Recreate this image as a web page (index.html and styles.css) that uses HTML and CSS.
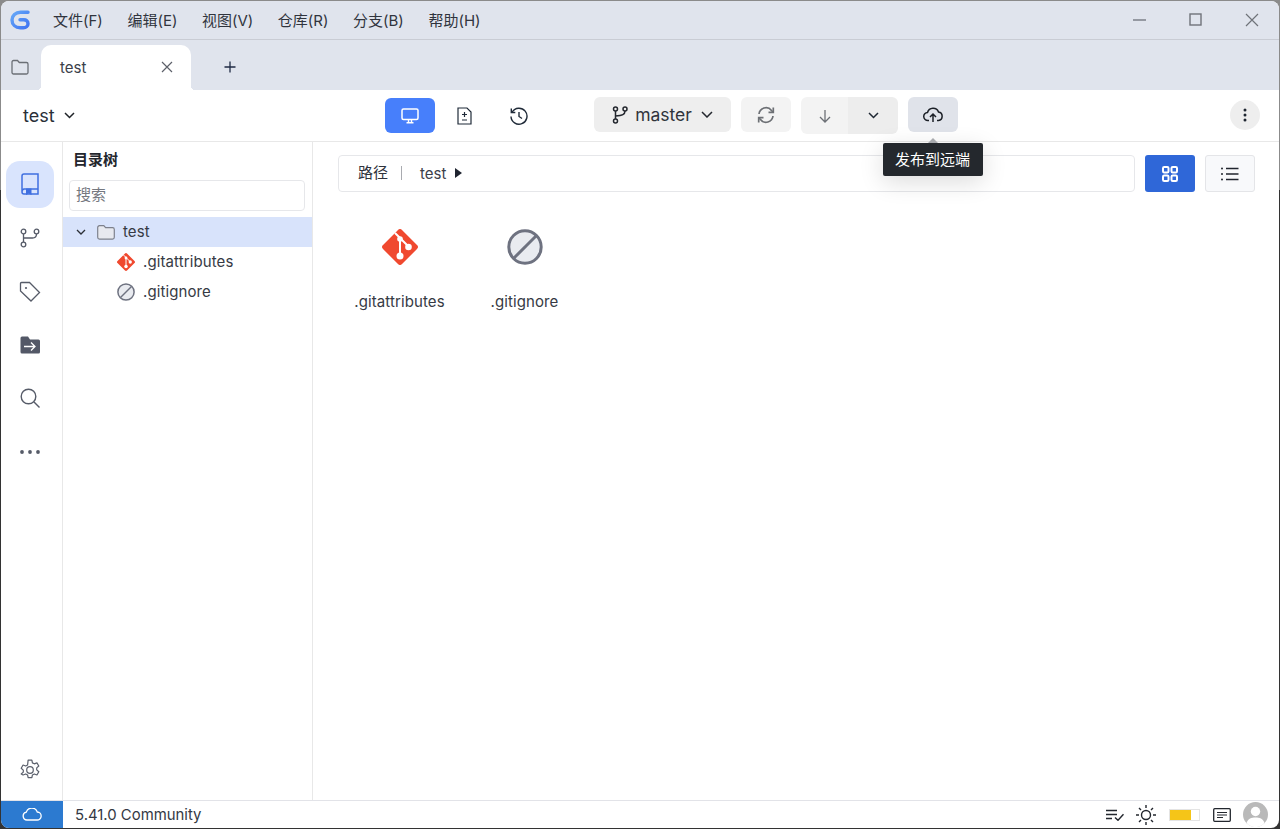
FILE: index.html
```html
<!DOCTYPE html>
<html lang="zh">
<head>
<meta charset="utf-8">
<title>test</title>
<link rel="stylesheet" href="styles.css">
</head>
<body>
<div class="window">
  <header class="menubar">
    <svg class="logo" width="20" height="20" viewBox="0 0 20 20" fill="none">
      <defs><linearGradient id="lg" x1="0" y1="0" x2="1" y2="1"><stop offset="0" stop-color="#66a8f7"/><stop offset="1" stop-color="#3f74f2"/></linearGradient></defs>
      <path d="M18 2.300H10.500C5.500 2.300 2 5.700 2 10c0 4.600 3.500 7.700 8.300 7.700h3c2.900 0 4.700-1.700 4.700-4 0-2.400-1.800-3.900-4.200-3.900H10" stroke="url(#lg)" stroke-width="3.400" stroke-linecap="round"/>
    </svg>
    <nav class="menu">
      <span>文件(F)</span><span>编辑(E)</span><span>视图(V)</span><span>仓库(R)</span><span>分支(B)</span><span>帮助(H)</span>
    </nav>
    <div class="winctl">
      <svg width="14" height="14" viewBox="0 0 14 14"><path d="M0 7h13" stroke="#7c8088" stroke-width="1.400"/></svg>
      <svg width="14" height="14" viewBox="0 0 14 14" fill="none"><rect x="1" y="1" width="11" height="11" stroke="#6f7379" stroke-width="1.400"/></svg>
      <svg width="14" height="14" viewBox="0 0 14 14" fill="none"><path d="M1 1l12 12M13 1L1 13" stroke="#6f7379" stroke-width="1.200"/></svg>
    </div>
  </header>

  <div class="tabbar">
    <svg class="tabfolder" width="18" height="16" viewBox="0 0 18 16" fill="none"><path d="M1 3a1.500 1.500 0 0 1 1.500-1.500h4l1.800 2h7.200A1.500 1.500 0 0 1 17 5v8.500a1.500 1.500 0 0 1-1.500 1.500h-13A1.500 1.500 0 0 1 1 13.500z" stroke="#6b6f76" stroke-width="1.300"/></svg>
    <div class="tab">
      <span>test</span>
      <svg class="tabclose" width="12" height="12" viewBox="0 0 12 12" fill="none"><path d="M1 1l10 10M11 1L1 11" stroke="#5d616a" stroke-width="1.200"/></svg>
    </div>
    <svg class="tabplus" width="12" height="12" viewBox="0 0 12 12" fill="none"><path d="M6 .5v11M.5 6h11" stroke="#1f2a44" stroke-width="1.300"/></svg>
  </div>

  <div class="toolbar">
    <div class="repo"><span>test</span>
      <svg width="11" height="7" viewBox="0 0 11 7" fill="none"><path d="M1 1l4.500 4.500L10 1" stroke="#1f2328" stroke-width="1.500"/></svg>
    </div>
    <div class="viewbtns">
      <button class="tbtn view-on">
        <svg width="18" height="16" viewBox="0 0 18 16" fill="none"><rect x="1" y="1" width="16" height="10.500" rx="1.500" stroke="#fff" stroke-width="1.500"/><path d="M7.500 12v2M10.500 12v2M5.500 14.800h7" stroke="#fff" stroke-width="1.400"/></svg>
      </button>
      <button class="tbtn plain">
        <svg width="15" height="18" viewBox="0 0 15 18" fill="none"><path d="M1 1h9l4 4v12H1z" stroke="#1f2a38" stroke-width="1.200"/><path d="M7.500 5v5M5 7.500h5M5 13h5" stroke="#1f2a38" stroke-width="1.200"/></svg>
      </button>
      <button class="tbtn plain">
        <svg width="19" height="18" viewBox="0 0 19 18" fill="none"><path d="M3.200 5A8 8 0 1 1 2 9.500" stroke="#1f2a38" stroke-width="1.400"/><path d="M2.300 1.500v4h4" stroke="#1f2a38" stroke-width="1.400"/><path d="M10 5v4.500l3 2" stroke="#1f2a38" stroke-width="1.400"/></svg>
      </button>
    </div>
    <button class="branch">
      <svg width="16" height="18" viewBox="0 0 16 18" fill="none"><circle cx="3.500" cy="3" r="2" stroke="#23272e" stroke-width="1.500"/><circle cx="3.500" cy="15" r="2" stroke="#23272e" stroke-width="1.500"/><circle cx="13" cy="3" r="2" stroke="#23272e" stroke-width="1.500"/><path d="M3.500 5v8M13 5c0 3.500-2.500 4.500-9.500 5" stroke="#23272e" stroke-width="1.500"/></svg>
      <span>master</span>
      <svg width="12" height="7" viewBox="0 0 12 7" fill="none"><path d="M1 1l5 5 5-5" stroke="#23272e" stroke-width="1.500"/></svg>
    </button>
    <button class="tbtn gray refresh">
      <svg width="18" height="18" viewBox="0 0 18 18" fill="none"><path d="M2 8a7 7 0 0 1 12.500-3.500L16 6M16 10a7 7 0 0 1-12.500 3.500L2 12" stroke="#6d7075" stroke-width="1.700"/><path d="M16.300 1.500V6.300h-4.800M1.700 16.500v-4.800h4.800" stroke="#6d7075" stroke-width="1.700"/></svg>
    </button>
    <div class="pull">
      <button class="pull-main">
        <svg width="12" height="14" viewBox="0 0 12 14" fill="none"><path d="M6 1v12M1 8l5 5 5-5" stroke="#6c7076" stroke-width="1.300"/></svg>
      </button>
      <button class="pull-more">
        <svg width="11" height="7" viewBox="0 0 11 7" fill="none"><path d="M1 1l4.500 4.500L10 1" stroke="#1e2733" stroke-width="1.500"/></svg>
      </button>
    </div>
    <button class="tbtn push">
      <svg width="20" height="16" viewBox="0 0 20 16" fill="none"><path d="M6 13.500H5a4 4 0 0 1-.5-8A5.800 5.800 0 0 1 15.500 5a4.300 4.300 0 0 1 0 8.500H14" stroke="#1c2027" stroke-width="1.500"/><path d="M10 15V7.500M7 10l3-3 3 3" stroke="#1c2027" stroke-width="1.500"/></svg>
    </button>
    <button class="kebab">
      <svg width="4" height="14" viewBox="0 0 4 14"><circle cx="2" cy="2" r="1.500" fill="#1e2530"/><circle cx="2" cy="7" r="1.500" fill="#1e2530"/><circle cx="2" cy="12" r="1.500" fill="#1e2530"/></svg>
    </button>
    <div class="tooltip">发布到远端</div>
  </div>

  <div class="main">
    <aside class="rail">
      <div class="rail-top">
        <div class="rail-item active">
          <svg width="18" height="23" viewBox="0 0 18 23" fill="none"><path d="M1 19V3a2 2 0 0 1 2-2h14v20H3a2 2 0 0 1-2-2 3 3 0 0 1 2-3h14" stroke="#3f6fe0" stroke-width="1.500"/><path d="M5 15.500h5.500V22l-2.750-1.500L5 22z" fill="#3f6fe0"/></svg>
        </div>
        <div class="rail-item">
          <svg width="20" height="20" viewBox="0 0 20 20" fill="none"><circle cx="3.500" cy="3.500" r="2.300" stroke="#565b68" stroke-width="1.300"/><circle cx="3.500" cy="16.500" r="2.300" stroke="#565b68" stroke-width="1.300"/><circle cx="16.500" cy="3.500" r="2.300" stroke="#565b68" stroke-width="1.300"/><path d="M3.500 6v8M16.500 6c0 3-1.500 4-4 4H3.500" stroke="#565b68" stroke-width="1.300"/></svg>
        </div>
        <div class="rail-item">
          <svg width="22" height="22" viewBox="0 0 22 22" fill="none"><path d="M1.500 2.500a1 1 0 0 1 1-1h8l10 10-8.500 8.500-10.500-10z" stroke="#565b68" stroke-width="1.300"/><circle cx="7" cy="7" r="1.100" fill="#565b68"/></svg>
        </div>
        <div class="rail-item">
          <svg width="20" height="18" viewBox="0 0 20 18"><path d="M.5 2A1.500 1.500 0 0 1 2 .5h6l2 3h8.500A1.500 1.500 0 0 1 20 5v11a1.500 1.500 0 0 1-1.500 1.500H2A1.500 1.500 0 0 1 .5 16z" fill="#535867"/><path d="M4 10.500h11M11 6.500l4 4-4 4" fill="none" stroke="#fff" stroke-width="1.300"/></svg>
        </div>
        <div class="rail-item">
          <svg class="glass" width="20" height="20" viewBox="0 0 20 20" fill="none"><circle cx="8.500" cy="8.500" r="7.300" stroke="#565b68" stroke-width="1.400"/><path d="M14 14l5.500 5.500" stroke="#565b68" stroke-width="1.400"/></svg>
        </div>
        <div class="rail-item">
          <svg width="20" height="4" viewBox="0 0 20 4"><circle cx="2" cy="2" r="1.900" fill="#565b68"/><circle cx="10" cy="2" r="1.900" fill="#565b68"/><circle cx="18" cy="2" r="1.900" fill="#565b68"/></svg>
        </div>
      </div>
      <div class="rail-gear">
        <svg width="22" height="22" viewBox="0 0 20 20" fill="none"><circle cx="10" cy="10" r="3" stroke="#5b606c" stroke-width="1.100"/><path d="M8.300 1h3.400l.5 2.500 1.700.9 2.400-.9 1.700 2.900-1.900 1.700v1.800l1.900 1.700-1.700 2.900-2.400-.9-1.700.9-.5 2.500H8.300l-.5-2.500-1.700-.9-2.400.9L2 13.600l1.900-1.700V10.100L2 8.400l1.700-2.900 2.400.9 1.700-.9z" stroke="#5b606c" stroke-width="1.100" stroke-linejoin="round"/></svg>
      </div>
    </aside>

    <section class="tree">
      <h2 class="tree-title">目录树</h2>
      <div class="search">搜索</div>
      <div class="tree-row selected">
        <svg class="caret" width="10" height="6" viewBox="0 0 10 6" fill="none"><path d="M1 1l4 4 4-4" stroke="#2b2f36" stroke-width="1.300"/></svg>
        <svg width="18" height="15" viewBox="0 0 18 15"><path d="M.7 2.500A1.800 1.800 0 0 1 2.500.7h4.300l1.800 2h6.900a1.800 1.800 0 0 1 1.800 1.800v7.800a1.800 1.800 0 0 1-1.800 1.800h-13A1.800 1.800 0 0 1 .7 12.300z" fill="#e7e9ef" stroke="#7d818c" stroke-width="1.200"/></svg>
        <span>test</span>
      </div>
      <div class="tree-row file">
        <svg width="18" height="18" viewBox="0 0 36 36"><use href="#giticon"/></svg>
        <span>.gitattributes</span>
      </div>
      <div class="tree-row file">
        <svg width="18" height="18" viewBox="0 0 36 36"><use href="#noicon"/></svg>
        <span>.gitignore</span>
      </div>
    </section>

    <section class="content">
      <div class="pathrow">
        <div class="pathbar">
          <span class="path-label">路径</span>
          <span class="path-crumb">test</span>
          <svg width="7" height="10" viewBox="0 0 7 10"><path d="M0 0l7 5-7 5z" fill="#1f2430"/></svg>
        </div>
        <button class="vbtn grid-on">
          <svg width="16" height="16" viewBox="0 0 16 16" fill="none"><rect x="1" y="1" width="5.500" height="5.500" rx="1.200" stroke="#fff" stroke-width="2"/><rect x="9.500" y="1" width="5.500" height="5.500" rx="1.200" stroke="#fff" stroke-width="2"/><rect x="1" y="9.500" width="5.500" height="5.500" rx="1.200" stroke="#fff" stroke-width="2"/><rect x="9.500" y="9.500" width="5.500" height="5.500" rx="1.200" stroke="#fff" stroke-width="2"/></svg>
        </button>
        <button class="vbtn list">
          <svg width="18" height="14" viewBox="0 0 18 14"><circle cx="1" cy="1.500" r="1" fill="#20252e"/><circle cx="1" cy="7" r="1" fill="#20252e"/><circle cx="1" cy="12.500" r="1" fill="#20252e"/><path d="M5 1.500h12.500M5 7h12.500M5 12.500h12.500" stroke="#20252e" stroke-width="1.300"/></svg>
        </button>
      </div>
      <div class="files">
        <div class="fileitem">
          <svg width="36" height="36" viewBox="0 0 36 36"><g id="giticon"><path d="M16 1L1 16a2.800 2.800 0 0 0 0 4l15 15a2.800 2.800 0 0 0 4 0l15-15a2.800 2.800 0 0 0 0-4L20 1a2.800 2.800 0 0 0-4 0z" fill="#f0492f"/><path d="M13 4l5 5v17M18 9l8.500 8.500" fill="none" stroke="#fff" stroke-width="2"/><circle cx="18" cy="27" r="3.500" fill="#fff"/><circle cx="26.500" cy="18" r="3.300" fill="#fff"/><circle cx="18" cy="10" r="2.800" fill="#fff"/></g></svg>
          <span>.gitattributes</span>
        </div>
        <div class="fileitem">
          <svg width="36" height="36" viewBox="0 0 36 36"><g id="noicon"><circle cx="18" cy="18" r="16.200" fill="#e9ebf0" stroke="#6e7280" stroke-width="3"/><path d="M7 29L29 7" stroke="#6e7280" stroke-width="3"/></g></svg>
          <span>.gitignore</span>
        </div>
      </div>
    </section>
  </div>

  <footer class="status">
    <div class="status-cloud">
      <svg width="20" height="13" viewBox="0 0 20 13" fill="none"><path d="M5 12a4 4 0 0 1-.7-7.900A5.800 5.800 0 0 1 15.300 4 4 4 0 0 1 15 12z" stroke="#fff" stroke-width="1.300"/></svg>
    </div>
    <span class="version">5.41.0 Community</span>
    <div class="status-right">
      <svg class="tasks" width="18" height="12" viewBox="0 0 18 12" fill="none"><path d="M0 1.500h11M0 5.500h11M0 9.500h6" stroke="#23272e" stroke-width="1.400"/><path d="M9 8.500l3 2.800 5.500-6" stroke="#23272e" stroke-width="1.400"/></svg>
      <svg width="20" height="20" viewBox="0 0 20 20" fill="none"><circle cx="10" cy="10" r="4.500" stroke="#23272e" stroke-width="1.400"/><path d="M10 0v3M10 17v3M0 10h3M17 10h3M3 3l2 2M15 15l2 2M17 3l-2 2M5 15l-2 2" stroke="#23272e" stroke-width="1.400"/></svg>
      <div class="battery"><div class="battery-fill"></div></div>
      <svg width="18" height="14" viewBox="0 0 18 14" fill="none"><rect x=".7" y=".7" width="16.600" height="12.600" rx="1" stroke="#23272e" stroke-width="1.300"/><path d="M4 4.500h10M4 7h10M4 9.500h6" stroke="#23272e" stroke-width="1.200"/></svg>
      <svg class="avatar" width="25" height="25" viewBox="0 0 25 25"><circle cx="12.500" cy="12.500" r="12.500" fill="#b9b9b9"/><circle cx="12.500" cy="9.500" r="4.700" fill="#fff"/><path d="M3.500 21c1.500-4.500 5-5.500 9-5.500s7.500 1 9 5.500a12 12 0 0 1-18 0z" fill="#fff"/></svg>
    </div>
  </footer>
</div>
</body>
</html>
```
FILE: styles.css
```css
* { box-sizing: border-box; }
html, body { margin: 0; height: 100%; }
body {
  background: linear-gradient(#8b8b8b 0, #8b8b8b 190px, #333 190px);
  font-family: Inter, "Noto Sans CJK SC", sans-serif;
  font-size: 15px;
  color: #2a2f3a;
  overflow: hidden;
}
button { border: 0; padding: 0; font: inherit; color: inherit; display: flex; align-items: center; justify-content: center; }
svg { display: block; flex: none; }

.window {
  position: relative;
  width: 1278px;
  height: 827px;
  margin: 1px;
  background: #fff;
  border-radius: 8px;
  overflow: hidden;
  display: flex;
  flex-direction: column;
}

.menubar {
  height: 39px;
  flex: none;
  display: flex;
  align-items: center;
  padding-left: 9px;
  background: #e0e4ed;
  border-bottom: 1px solid #c9ccd4;
}
.logo { margin-right: 23px; }
.menu { display: flex; gap: 24.600px; font-size: 15px; color: #30343d; margin-bottom: 1px; }
.winctl { margin-left: auto; display: flex; gap: 42px; padding-right: 20px; align-items: center; }

.tabbar {
  height: 50px;
  flex: none;
  background: #e0e4ed;
  display: flex;
  align-items: flex-end;
  padding-top: 5px;
}
.tabfolder { align-self: center; margin: 0 12px 1px 10px; }
.tab {
  position: relative;
  width: 150px;
  height: 45px;
  background: #fff;
  border-radius: 10px 10px 0 0;
  display: flex;
  align-items: center;
  justify-content: space-between;
  padding: 0 18px 0 19px;
  font-size: 15px;
  color: #3a3f4a;
}
.tabclose { margin-bottom: 2px; }
.tab::before, .tab::after {
  content: "";
  position: absolute;
  bottom: 0;
  width: 4px;
  height: 4px;
}
.tab::before { left: -4px; background: radial-gradient(circle at 0 0, transparent 4px, #fff 4px); }
.tab::after { right: -4px; background: radial-gradient(circle at 100% 0, transparent 4px, #fff 4px); }
.tabplus { align-self: center; margin: 0 0 1px 33px; }

.toolbar {
  height: 52px;
  flex: none;
  display: flex;
  align-items: flex-start;
  border-bottom: 1px solid #e8e8e8;
  padding-top: 7px;
}
.repo {
  width: 384px;
  height: 36px;
  padding: 0 0 0 22px;
  display: flex;
  align-items: center;
  gap: 9px;
  font-size: 18px;
  color: #2a2f38;
}
.tbtn { width: 50px; height: 35px; border-radius: 6px; background: transparent; }
.viewbtns { display: flex; gap: 4px; margin-top: 1px; }
.view-on { background: #477ffb; }
.plain { width: 50px; }
.branch {
  width: 137px;
  height: 35px;
  margin-left: 51px;
  background: #eeeeee;
  border-radius: 6px;
  gap: 7px;
  font-size: 17.500px;
  color: #30343c;
}
.branch svg:last-child { margin-left: 2px; }
.gray { background: #f3f3f3; }
.refresh { margin-left: 10px; }
.pull { display: flex; margin-left: 10px; height: 37px; border-radius: 6px; overflow: hidden; }
.pull-main { width: 47px; background: #f3f3f3; }
.pull-more { width: 50px; background: #ededed; }
.push { margin-left: 10px; background: #e0e3ea; }
.kebab { width: 30px; height: 30px; border-radius: 50%; background: #eeeeee; margin-left: auto; margin-right: 19px; margin-top: 3px; }

.tooltip {
  position: absolute;
  left: 882px;
  top: 142px;
  width: 100px;
  height: 33px;
  padding: 0 1px 2px 0;
  background: #24282d;
  color: #fff;
  font-size: 15px;
  border-radius: 2px;
  display: flex;
  align-items: center;
  justify-content: center;
  z-index: 5;
  box-shadow: 0 6px 24px rgba(0,0,0,.14);
}
.tooltip::before {
  content: "";
  position: absolute;
  left: 45px;
  top: -5px;
  border-left: 5px solid transparent;
  border-right: 5px solid transparent;
  border-bottom: 5px solid #a7a9ad;
}

.main { flex: 1; min-height: 0; display: flex; }
.rail {
  width: 62px;
  flex: none;
  border-right: 1px solid #e8e8e8;
  display: flex;
  flex-direction: column;
  justify-content: space-between;
  padding: 19px 0 0 5px;
}
.rail-top { display: flex; flex-direction: column; gap: 6.600px; }
.rail-item { width: 48px; height: 47px; display: flex; align-items: center; justify-content: center; border-radius: 14px; }
.rail-item.active { background: #d9e4fd; }
.glass { margin-bottom: 1px; }
.rail-gear { width: 48px; height: 60px; display: flex; align-items: center; justify-content: center; }

.tree { width: 250px; flex: none; border-right: 1px solid #e8e8e8; }
.tree-title { margin: 0; padding: 9px 0 0 10px; height: 38px; font-size: 15px; line-height: 18px; font-weight: 600; color: #23262d; }
.search {
  margin: 0 7px 6px 6px;
  height: 31px;
  border: 1px solid #e6e7ea;
  border-radius: 4px;
  padding-left: 6px;
  line-height: 28px;
  font-size: 15px;
  color: #75787f;
}
.tree-row { height: 30px; display: flex; align-items: center; font-size: 15px; letter-spacing: .1px; color: #363a44; }
.tree-row span { margin-bottom: 2px; }
.tree-row.selected { background: #d8e3fb; padding-left: 13px; gap: 8px; }
.caret { margin-right: 3px; }
.tree-row.file { padding-left: 54px; gap: 8px; }

.content { flex: 1; min-width: 0; padding: 13px 24px 0 25px; }
.pathrow { display: flex; gap: 10px; height: 38px; }
.pathbar {
  flex: 1;
  height: 37px;
  border: 1px solid #e6e7ea;
  border-radius: 4px;
  display: flex;
  align-items: center;
  padding: 0 0 1px 19px;
}
.path-label { padding-right: 13px; border-right: 1px solid #a9abb0; line-height: 14px; color: #2f333c; }
.path-crumb { margin: 0 9px 0 18px; color: #3c404a; }
.vbtn { width: 50px; height: 37px; border-radius: 3px; }
.grid-on { background: #2f67d8; }
.list { background: #f8f9fb; border: 1px solid #e4e5e8; }
.files { display: flex; margin: 36px 0 0 -1px; }
.fileitem { width: 125px; height: 110px; display: flex; flex-direction: column; align-items: center; color: #363a44; font-size: 15px; letter-spacing: .1px; }
.fileitem svg { margin-bottom: 28px; }
.fileitem span { line-height: 18px; }

.status {
  height: 28px;
  flex: none;
  display: flex;
  align-items: center;
  border-top: 1px solid #e2e3e8;
}
.status-cloud { width: 62px; height: 27px; background: #2c7ad0; display: flex; align-items: center; justify-content: center; }
.version { margin-left: 12px; font-size: 14.900px; color: #343944; }
.status-right { margin-left: auto; display: flex; align-items: center; gap: 13px; padding-right: 11px; }
.tasks { margin-right: -1px; }
.battery { width: 31px; height: 12px; border: 1px solid #e4e4e4; background: #fff; }
.battery-fill { width: 21px; height: 100%; background: #f5c518; }
.avatar { margin-left: -1px; }
```
